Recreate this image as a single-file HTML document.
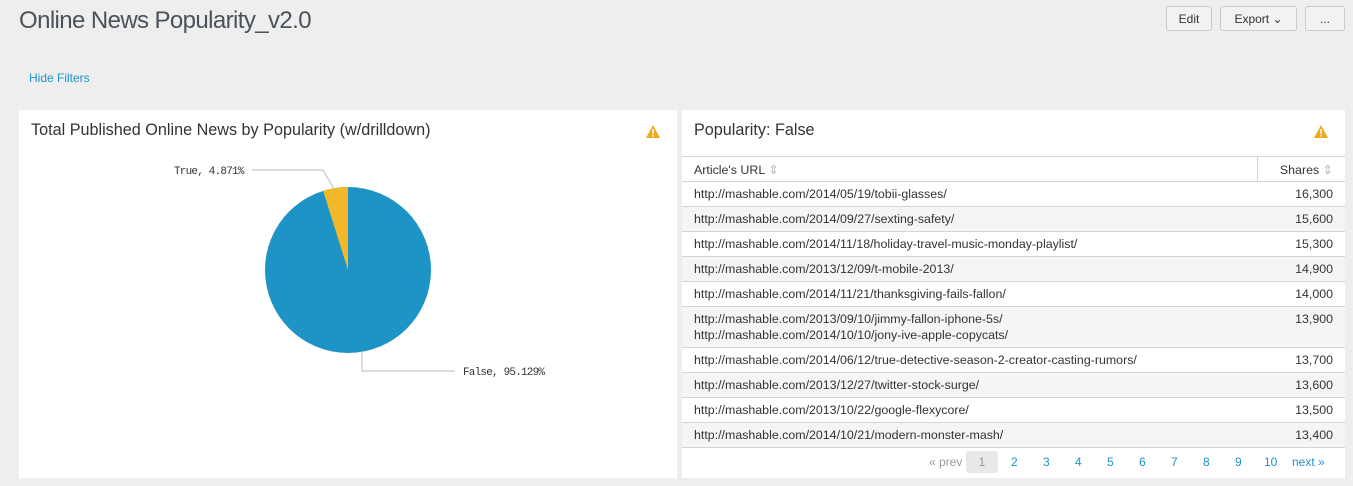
<!DOCTYPE html>
<html><head><style>
body{margin:0;width:1353px;height:486px;background:#eeeeee;font-family:"Liberation Sans",sans-serif;position:relative;overflow:hidden;color:#333}
.abs{position:absolute}
h1{position:absolute;left:19px;top:7px;margin:0;font-weight:normal;font-size:24px;color:#4a525b;letter-spacing:-0.6px}
.btn{position:absolute;top:6px;height:25px;border:1px solid #c3cbd4;border-radius:3px;background:#f2f2f2;font-size:12px;line-height:25px;text-align:center;color:#333;box-sizing:border-box}
.panel{position:absolute;top:110px;height:368px;background:#fff}
.ptitle{position:absolute;left:12px;top:11px;font-size:16.2px;color:#333}
.warn{position:absolute;top:15px}
table{border-collapse:collapse;position:absolute;left:0;top:46px;width:663px;font-size:12.4px}
td,th{padding:0 12px;height:24px;border-bottom:1px solid #d5d5d5;vertical-align:middle}
th{font-weight:normal;text-align:left;border-top:1px solid #d5d5d5;color:#333}
tr.s td{background:#f5f5f5}
td.n,th.n{text-align:right}
.pg{position:absolute;top:345px;font-size:12px;color:#1e93c6}
</style></head><body>
<h1>Online News Popularity_v2.0</h1>
<div class="btn" style="left:1166px;width:46px">Edit</div>
<div class="btn" style="left:1220px;width:77px">Export &#8964;</div>
<div class="btn" style="left:1305px;width:40px">...</div>
<div class="abs" style="left:29px;top:71px;font-size:12px;color:#1e93c6">Hide Filters</div>

<div class="panel" style="left:19px;width:658px">
<div class="ptitle">Total Published Online News by Popularity (w/drilldown)</div>
<svg class="warn" style="left:627px" width="14" height="13" viewBox="0 0 14 13"><path d="M7 0L14 13H0Z" fill="#f1a81a"/><rect x="6.2" y="4" width="1.6" height="5" fill="#fff"/><rect x="6.2" y="10" width="1.6" height="1.6" fill="#fff"/></svg>
<svg class="abs" style="left:0;top:0" width="658" height="368">
<circle cx="329" cy="160" r="83" fill="#1e93c6"/>
<path d="M329 160L329 77A83 83 0 0 0 304.1 80.8Z" fill="#f2b827"/>
<polyline points="233,60 304,60 315,79" fill="none" stroke="#bbb"/>
<polyline points="343,241 343,261 436,261" fill="none" stroke="#bbb"/>
<text x="155" y="64" font-size="11" fill="#333" font-family="Liberation Mono,monospace" letter-spacing="-0.8">True, 4.871%</text>
<text x="444" y="265" font-size="11" fill="#333" font-family="Liberation Mono,monospace" letter-spacing="-0.8">False, 95.129%</text>
</svg>
</div>

<div class="panel" style="left:682px;width:663px">
<div class="ptitle">Popularity: False</div>
<svg class="warn" style="left:632px" width="14" height="13" viewBox="0 0 14 13"><path d="M7 0L14 13H0Z" fill="#f1a81a"/><rect x="6.2" y="4" width="1.6" height="5" fill="#fff"/><rect x="6.2" y="10" width="1.6" height="1.6" fill="#fff"/></svg>
<table>
<tr><th style="border-right:1px solid #d5d5d5">Article's URL <span style="color:#bbb">&#8661;</span></th><th class="n" style="width:63px">Shares <span style="color:#bbb">&#8661;</span></th></tr>
<tr><td>http://mashable.com/2014/05/19/tobii-glasses/</td><td class="n">16,300</td></tr>
<tr class="s"><td>http://mashable.com/2014/09/27/sexting-safety/</td><td class="n">15,600</td></tr>
<tr><td>http://mashable.com/2014/11/18/holiday-travel-music-monday-playlist/</td><td class="n">15,300</td></tr>
<tr class="s"><td>http://mashable.com/2013/12/09/t-mobile-2013/</td><td class="n">14,900</td></tr>
<tr><td>http://mashable.com/2014/11/21/thanksgiving-fails-fallon/</td><td class="n">14,000</td></tr>
<tr class="s"><td style="height:40px;line-height:16px">http://mashable.com/2013/09/10/jimmy-fallon-iphone-5s/<br>http://mashable.com/2014/10/10/jony-ive-apple-copycats/</td><td class="n" style="vertical-align:top;padding-top:5px">13,900</td></tr>
<tr><td>http://mashable.com/2014/06/12/true-detective-season-2-creator-casting-rumors/</td><td class="n">13,700</td></tr>
<tr class="s"><td>http://mashable.com/2013/12/27/twitter-stock-surge/</td><td class="n">13,600</td></tr>
<tr><td>http://mashable.com/2013/10/22/google-flexycore/</td><td class="n">13,500</td></tr>
<tr class="s"><td>http://mashable.com/2014/10/21/modern-monster-mash/</td><td class="n">13,400</td></tr>
</table>
<div class="pg" style="left:247px;color:#999">« prev</div>
<div class="abs" style="left:284px;top:341px;width:32px;height:22px;background:#e8e8e8;border-radius:3px;font-size:12px;line-height:22px;text-align:center;color:#999">1</div>
<div class="pg" style="left:329px">2</div><div class="pg" style="left:361px">3</div><div class="pg" style="left:393px">4</div><div class="pg" style="left:425px">5</div><div class="pg" style="left:457px">6</div><div class="pg" style="left:489px">7</div><div class="pg" style="left:521px">8</div><div class="pg" style="left:553px">9</div><div class="pg" style="left:582px">10</div><div class="pg" style="left:610px">next »</div>
</div>
</body></html>
